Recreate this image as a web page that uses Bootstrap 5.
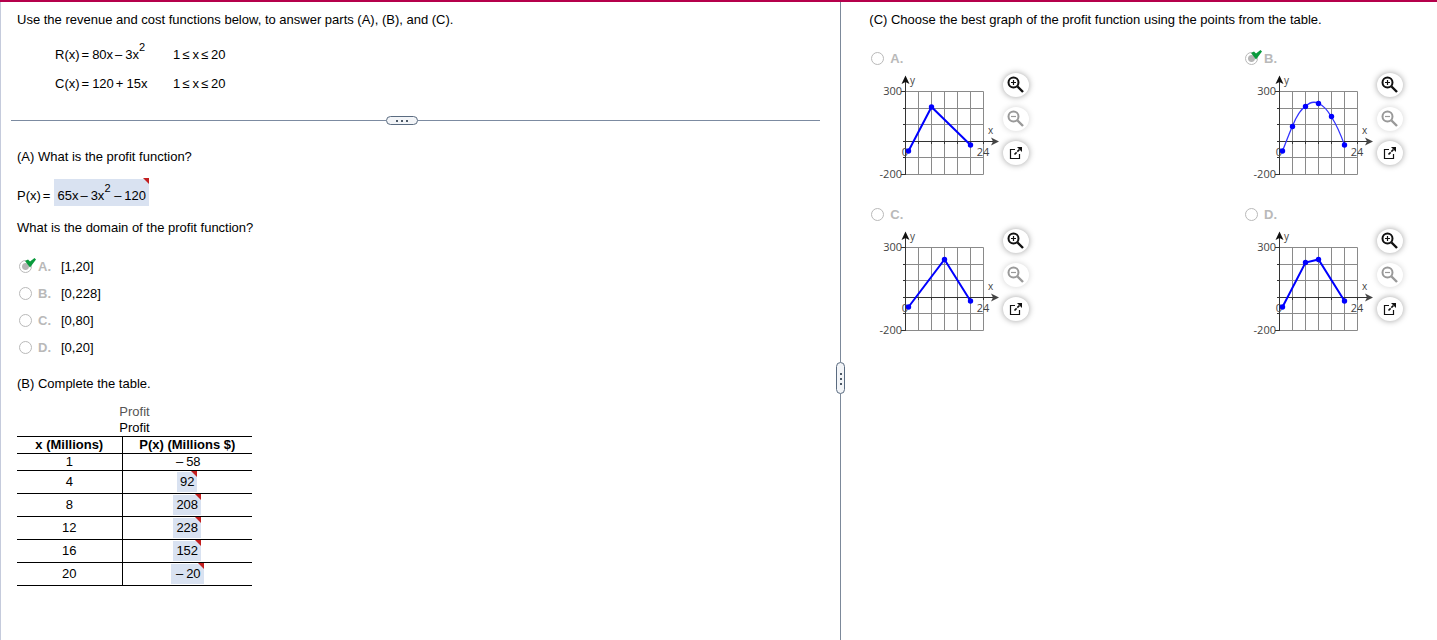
<!DOCTYPE html>
<html lang="en">
<head>
<meta charset="utf-8">
<meta name="viewport" content="width=device-width, initial-scale=1">
<title>Profit function exercise</title>
<link href="https://cdn.jsdelivr.net/npm/bootstrap@5.3.0/dist/css/bootstrap.min.css" rel="stylesheet">
<style>
body{font:13px/16px "Liberation Sans",Arial,sans-serif;color:#000;background:#fff}
.exercise{border-top:2px solid #b5004b}
.given{flex:0 0 58.2%;min-width:0;border-left:1px solid #c5cbdc;padding:10px 16px 16px}
.graphs{flex:1 1 0;min-width:0;padding:10px 34px 16px 24px}
.splitter{width:9px}
.rule-v{width:1px;background:#7c899a}
.rule-h{height:1px;background:#7c8ba1}
.grip{border:1px solid #5a6b80;background:#f3f5f8;color:#4d5a68;padding:0}
.grip svg{display:block}
.grip-v{width:9px;height:32px;border-radius:5px}
.grip-h{width:32px;height:9px;border-radius:5px}
.split-row{margin:22px 0 24px -6px}
.grow-a{flex:374 1 0}.grow-b{flex:402 1 0}
.tall-a{flex:360 1 0}.tall-b{flex:246 1 0}
.equations{margin:17px 0 0 38px;display:grid;grid-template-columns:118px auto;row-gap:9px;line-height:20px;justify-content:start}
.op{margin:0 3px 0 2px}
sup{font-size:11px;line-height:0;top:-8px}
.answer-row{line-height:32px;margin-top:14px}
.answer{position:relative;display:inline-block;background:#d9e2f1;line-height:20px;padding:0 3px}
.answer::after{content:"";position:absolute;right:0;top:-1px;border-top:6px solid #c31f1f;border-left:6px solid transparent}
.answer-wide{padding:7px 3px 0}
.domain{margin:17px 0 15px}
.choice{height:27px;gap:6px}
.letter{font-weight:700;color:#b9b9b9;width:17px}
.option .choice{height:20px;line-height:14px}
.pick{appearance:none;width:13px;height:13px;margin:0;border:1px solid #b9b9b9;border-radius:50%;background:#fff}
.pick:checked{background:radial-gradient(circle,#b5b5b5 0 3px,#fff 4px)}
.pick-wrap{position:relative;width:13px;height:13px;margin-left:2px}
.tick{position:absolute;left:6px;top:-2px}
.profit{width:235px;margin-top:12px;border-collapse:collapse;text-align:center}
.profit th,.profit td{border-bottom:1px solid #000;border-top:1px solid #000;padding:0;height:17px;line-height:16px}
.profit .filled td{height:23px;line-height:22px}
.profit th:first-child,.profit td:first-child{width:105px;border-right:1px solid #000}
.profit caption{caption-side:top;text-align:center;padding:0;color:#000}
.caption-muted{color:#555}
.option{width:160px}
.second{margin-top:26px}
.plot{margin-left:7px}
.plot text{font:11px "Open Sans",sans-serif;fill:#444}
.plot .axis-name{font-size:10px}
.tools{gap:10px;margin:1px 0 0 3px}
.tool{width:26px;height:24px;border:0;border-radius:50%;background:#fff;box-shadow:0 0 6px rgba(0,0,0,.38);padding:0;color:#111}
.tool svg{display:block;margin:auto}
.tool:disabled{color:#999;box-shadow:0 0 6px rgba(0,0,0,.18)}
</style>
<script src="https://cdn.jsdelivr.net/npm/bootstrap@5.3.0/dist/js/bootstrap.bundle.min.js"></script>
</head>
<body>
<svg width="0" height="0" class="position-absolute" aria-hidden="true">
<symbol id="zoom-in" viewBox="0 0 18 18"><g fill="none" stroke="currentColor"><circle cx="6.5" cy="6.5" r="5" stroke-width="2"/><path d="M10.5 10.5L16 16" stroke-width="2.4"/><path d="M4 6.5h5M6.5 4v5" stroke-width="1.2"/></g></symbol>
<symbol id="zoom-out" viewBox="0 0 18 18"><g fill="none" stroke="currentColor"><circle cx="6.5" cy="6.5" r="5" stroke-width="2"/><path d="M10.5 10.5L16 16" stroke-width="2.4"/><path d="M4 6.5h5" stroke-width="1.2"/></g></symbol>
<symbol id="pop-out" viewBox="0 0 14 14"><path d="M6 3.5H1.500V12.500H10.500V8" fill="none" stroke="currentColor" stroke-width="1.2"/><path d="M5.500 8.500L10.500 3.500" stroke="currentColor" stroke-width="1.6" stroke-dasharray="3 1"/><path d="M8 1h5v5z" fill="currentColor"/></symbol>
<symbol id="check" viewBox="0 0 11 10"><path d="M0 3l3-1.500 2 2L9.500 0 11 1.500 5 9.500z" fill="#0a9a3c"/></symbol>
<symbol id="grid" viewBox="0 0 124 110">
<path d="M42.500 19.500v83M55.500 19.500v83M68.500 19.500v83M81.500 19.500v83M94.500 19.500v83M107.500 19.500v83M29.500 19.500h78M29.500 36.500h78M29.500 52.500h78M29.500 85.500h78M29.500 102.500h78" stroke="#8a8a8a" stroke-width="1"/>
<path d="M29.500 8v95M27 69.500h90M25 19.500h5M27 36.500h3M27 52.500h3M27 85.500h3M25 102.500h5M42.500 69v3M55.500 69v3M68.500 69v3M81.500 69v3M94.500 69v3M107.500 69v3" stroke="#333" stroke-width="1"/>
<path d="M29.500 3.500l4 8.500-4-2-4 2z" fill="#111"/><path d="M123 69.500l-8 4 2-4-2-4z" fill="#444"/>
</symbol>
</svg>
<main class="exercise d-flex min-vh-100">
<section class="given">
<p class="mb-0">Use the revenue and cost functions below, to answer parts (A), (B), and (C).</p>
<div class="equations">
<span>R(x)<span class="op">=</span>80x<span class="op">–</span>3x<sup>2</sup></span><span>1<span class="op">≤</span>x<span class="op">≤</span>20</span>
<span>C(x)<span class="op">=</span>120<span class="op">+</span>15x</span><span>1<span class="op">≤</span>x<span class="op">≤</span>20</span>
</div>
<div class="split-row d-flex align-items-center"><div class="rule-h grow-a"></div><button type="button" class="grip grip-h" aria-label="Resize question"><svg width="30" height="7"><path d="M9 3h2v2H9zM14 3h2v2h-2zM19 3h2v2h-2z" fill="currentColor"/></svg></button><div class="rule-h grow-b"></div></div>
<p class="mb-0">(A) What is the profit function?</p>
<p class="answer-row mb-0">P(x)<span class="op me-1">=</span><span class="answer answer-wide">65x<span class="op">–</span>3x<sup>2</sup> <span class="op ms-0">–</span>120</span></p>
<p class="mt-2 mb-0">What is the domain of the profit function?</p>
<div class="domain">
<label class="choice d-flex align-items-center"><span class="pick-wrap d-flex"><input class="pick" type="radio" name="domain" checked disabled><svg class="tick" width="11" height="10"><use href="#check"/></svg></span><span class="letter">A.</span><span>[1,20]</span></label>
<label class="choice d-flex align-items-center"><span class="pick-wrap d-flex"><input class="pick" type="radio" name="domain" disabled></span><span class="letter">B.</span><span>[0,228]</span></label>
<label class="choice d-flex align-items-center"><span class="pick-wrap d-flex"><input class="pick" type="radio" name="domain" disabled></span><span class="letter">C.</span><span>[0,80]</span></label>
<label class="choice d-flex align-items-center"><span class="pick-wrap d-flex"><input class="pick" type="radio" name="domain" disabled></span><span class="letter">D.</span><span>[0,20]</span></label>
</div>
<p class="mb-0">(B) Complete the table.</p>
<table class="profit">
<caption><span class="d-block caption-muted">Profit</span><span class="d-block">Profit</span></caption>
<thead><tr><th scope="col">x (Millions)</th><th scope="col">P(x) (Millions $)</th></tr></thead>
<tbody>
<tr><td>1</td><td><span class="op">–</span>58</td></tr>
<tr class="filled"><td>4</td><td><span class="answer">92</span></td></tr>
<tr class="filled"><td>8</td><td><span class="answer">208</span></td></tr>
<tr class="filled"><td>12</td><td><span class="answer">228</span></td></tr>
<tr class="filled"><td>16</td><td><span class="answer">152</span></td></tr>
<tr class="filled"><td>20</td><td><span class="answer"><span class="op">–</span>20</span></td></tr>
</tbody>
</table>
</section>
<div class="splitter d-flex flex-column align-items-center flex-shrink-0"><div class="rule-v tall-a"></div><button type="button" class="grip grip-v" aria-label="Resize panels"><svg width="7" height="30"><path d="M3 10h2v2H3zM3 15h2v2H3zM3 20h2v2H3z" fill="currentColor"/></svg></button><div class="rule-v tall-b"></div></div>
<section class="graphs">
<p class="mb-4">(C) Choose the best graph of the profit function using the points from the table.</p>
<div class="d-flex justify-content-between">
<div class="option">
<label class="choice d-flex"><span class="pick-wrap d-flex"><input class="pick" type="radio" name="graph" disabled></span><span class="letter">A.</span></label>
<div class="d-flex">
<svg class="plot" width="124" height="110" viewBox="0 0 124 110"><use href="#grid"/><text x="26" y="23" text-anchor="end">300</text><text x="26" y="106" text-anchor="end">-200</text><text x="29" y="84" text-anchor="middle">0</text><text x="107" y="84" text-anchor="middle">24</text><text class="axis-name" x="112" y="62">x</text><text class="axis-name" x="34" y="12">y</text><path d="M32.500 79L55.500 35 94.500 73" fill="none" stroke="#00f" stroke-width="2"/><g fill="#00f"><circle cx="32.500" cy="79" r="2.700"/><circle cx="55.500" cy="35" r="2.700"/><circle cx="94.500" cy="73" r="2.700"/></g></svg>
<div class="tools d-flex flex-column"><button class="tool" type="button" aria-label="Zoom in"><svg width="18" height="18"><use href="#zoom-in"/></svg></button><button class="tool" type="button" aria-label="Zoom out" disabled><svg width="18" height="18"><use href="#zoom-out"/></svg></button><button class="tool" type="button" aria-label="Open graph"><svg width="14" height="14"><use href="#pop-out"/></svg></button></div>
</div>
</div>
<div class="option">
<label class="choice d-flex"><span class="pick-wrap d-flex"><input class="pick" type="radio" name="graph" checked disabled><svg class="tick" width="11" height="10"><use href="#check"/></svg></span><span class="letter">B.</span></label>
<div class="d-flex">
<svg class="plot" width="124" height="110" viewBox="0 0 124 110"><use href="#grid"/><text x="26" y="23" text-anchor="end">300</text><text x="26" y="106" text-anchor="end">-200</text><text x="29" y="84" text-anchor="middle">0</text><text x="107" y="84" text-anchor="middle">24</text><text class="axis-name" x="112" y="62">x</text><text class="axis-name" x="34" y="12">y</text><path d="M32.500 79C35 73 38.500 63 42.500 54Q49 38 55.500 34.500Q62 28 68.500 31.500Q75 34 81.500 45Q88 55 94.500 73" fill="none" stroke="#33f" stroke-width="1.300"/><g fill="#00f"><circle cx="32.500" cy="79" r="2.700"/><circle cx="42.500" cy="54.500" r="2.700"/><circle cx="55.500" cy="34.500" r="2.700"/><circle cx="68.500" cy="31.500" r="2.700"/><circle cx="81.500" cy="44.500" r="2.700"/><circle cx="94.500" cy="73" r="2.700"/></g></svg>
<div class="tools d-flex flex-column"><button class="tool" type="button" aria-label="Zoom in"><svg width="18" height="18"><use href="#zoom-in"/></svg></button><button class="tool" type="button" aria-label="Zoom out" disabled><svg width="18" height="18"><use href="#zoom-out"/></svg></button><button class="tool" type="button" aria-label="Open graph"><svg width="14" height="14"><use href="#pop-out"/></svg></button></div>
</div>
</div>
</div>
<div class="second d-flex justify-content-between">
<div class="option">
<label class="choice d-flex"><span class="pick-wrap d-flex"><input class="pick" type="radio" name="graph" disabled></span><span class="letter">C.</span></label>
<div class="d-flex">
<svg class="plot" width="124" height="110" viewBox="0 0 124 110"><use href="#grid"/><text x="26" y="23" text-anchor="end">300</text><text x="26" y="106" text-anchor="end">-200</text><text x="29" y="84" text-anchor="middle">0</text><text x="107" y="84" text-anchor="middle">24</text><text class="axis-name" x="112" y="62">x</text><text class="axis-name" x="34" y="12">y</text><path d="M32.500 79L68.500 31.500 94.500 73" fill="none" stroke="#00f" stroke-width="2"/><g fill="#00f"><circle cx="32.500" cy="79" r="2.700"/><circle cx="68.500" cy="31.500" r="2.700"/><circle cx="94.500" cy="73" r="2.700"/></g></svg>
<div class="tools d-flex flex-column"><button class="tool" type="button" aria-label="Zoom in"><svg width="18" height="18"><use href="#zoom-in"/></svg></button><button class="tool" type="button" aria-label="Zoom out" disabled><svg width="18" height="18"><use href="#zoom-out"/></svg></button><button class="tool" type="button" aria-label="Open graph"><svg width="14" height="14"><use href="#pop-out"/></svg></button></div>
</div>
</div>
<div class="option">
<label class="choice d-flex"><span class="pick-wrap d-flex"><input class="pick" type="radio" name="graph" disabled></span><span class="letter">D.</span></label>
<div class="d-flex">
<svg class="plot" width="124" height="110" viewBox="0 0 124 110"><use href="#grid"/><text x="26" y="23" text-anchor="end">300</text><text x="26" y="106" text-anchor="end">-200</text><text x="29" y="84" text-anchor="middle">0</text><text x="107" y="84" text-anchor="middle">24</text><text class="axis-name" x="112" y="62">x</text><text class="axis-name" x="34" y="12">y</text><path d="M32.500 79L55.500 34.500 68.500 31.500 94.500 73" fill="none" stroke="#00f" stroke-width="2"/><g fill="#00f"><circle cx="32.500" cy="79" r="2.700"/><circle cx="55.500" cy="34.500" r="2.700"/><circle cx="68.500" cy="31.500" r="2.700"/><circle cx="94.500" cy="73" r="2.700"/></g></svg>
<div class="tools d-flex flex-column"><button class="tool" type="button" aria-label="Zoom in"><svg width="18" height="18"><use href="#zoom-in"/></svg></button><button class="tool" type="button" aria-label="Zoom out" disabled><svg width="18" height="18"><use href="#zoom-out"/></svg></button><button class="tool" type="button" aria-label="Open graph"><svg width="14" height="14"><use href="#pop-out"/></svg></button></div>
</div>
</div>
</div>
</section>
</main>
</body>
</html>
